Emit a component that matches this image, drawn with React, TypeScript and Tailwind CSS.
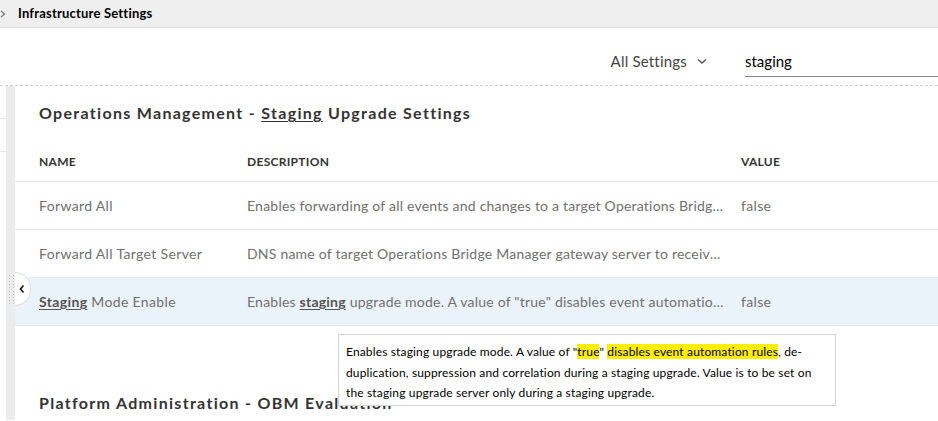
import React from "react";

const rows = [
  {
    name: <>Forward All</>,
    desc: <>Enables forwarding of all events and changes to a target Operations Bridge Manager gateway server</>,
    value: "false",
    active: false,
  },
  {
    name: <>Forward All Target Server</>,
    desc: <>DNS name of target Operations Bridge Manager gateway server to receive forwarded events</>,
    value: "",
    active: false,
  },
  {
    name: (
      <>
        <span className="font-bold underline underline-offset-2 text-[#555]">Staging</span> Mode Enable
      </>
    ),
    desc: (
      <>
        Enables <span className="font-bold underline underline-offset-2 text-[#555]">staging</span> upgrade mode. A value of "true" disables event automation rules, de-duplication
      </>
    ),
    value: "false",
    active: true,
  },
];

export default function App() {
  return (
    <div
      className="relative w-[938px] h-[421px] overflow-hidden bg-white text-[#333]"
      style={{ fontFamily: "Lato, 'Open Sans', sans-serif" }}
    >
      {/* Header bar */}
      <div className="h-[28px] bg-[#efefef] border-b border-[#dcdcdc] flex items-center">
        <svg width="10" height="10" viewBox="0 0 10 10" className="ml-[-2px]">
          <path d="M3 2 L6.5 5 L3 8" stroke="#777" strokeWidth="1.3" fill="none" />
        </svg>
        <span className="ml-[10px] text-[13px] font-bold text-black tracking-[0.2px]">Infrastructure Settings</span>
      </div>

      {/* Toolbar */}
      <div className="h-[58px] flex items-center justify-end border-b border-dashed border-[#d0d0d0]">
        <div className="flex items-center gap-[10px] mr-[38px] mt-[10px] text-[15px] text-[#444]">
          <span className="tracking-[0.2px]">All Settings</span>
          <svg width="10" height="7" viewBox="0 0 10 7">
            <path d="M1 1.5 L5 5 L9 1.5" stroke="#555" strokeWidth="1.5" fill="none" />
          </svg>
        </div>
        <div className="w-[193px] h-[30px] mt-[10px] border-b border-[#888] flex items-center text-[15px] text-black">
          staging
        </div>
      </div>

      {/* Body */}
      <div className="flex h-[334px]">
        <div className="w-[6px] flex flex-col">
          <div className="h-[33px] border-b border-[#e4e4e4]" />
          <div className="h-[33px] border-b border-[#e4e4e4]" />
        </div>
        <div className="w-[9px] bg-[#ececec]" />
        <div className="flex-1 pt-[17px]">
          <div className="pl-[24px] text-[16px] font-bold text-[#333] tracking-[1.3px] leading-[20px]">
            Operations Management - <span className="underline underline-offset-2">Staging</span> Upgrade Settings
          </div>
          <div className="mt-[19px] h-[40px] flex items-center border-b border-[#e8e8e8] text-[12px] font-bold text-[#333] tracking-[0.3px]">
            <div className="w-[232px] pl-[24px]">NAME</div>
            <div className="w-[494px]">DESCRIPTION</div>
            <div>VALUE</div>
          </div>
          {rows.map((r, i) => (
            <div
              key={i}
              className={`h-[48px] flex items-center border-b border-[#e8e8e8] text-[14px] text-[#707070] ${
                r.active ? "bg-[#ebf3fa]" : "bg-white"
              }`}
            >
              <div className="w-[232px] pl-[24px] whitespace-nowrap tracking-[0.35px]">{r.name}</div>
              <div className="w-[494px] pr-[16px] whitespace-nowrap overflow-hidden text-ellipsis tracking-[0.22px]">
                {r.desc}
              </div>
              <div className="tracking-[0.35px]">{r.value}</div>
            </div>
          ))}
          <div className="mt-[67px] pl-[24px] text-[16px] font-bold text-[#333] tracking-[1.3px] leading-[20px]">
            Platform Administration - OBM Evaluation
          </div>
        </div>
      </div>

      {/* Collapse handle */}
      <div className="absolute left-[9px] top-[274px] w-[5px] h-[31px] flex flex-col justify-between py-[1px]">
        {Array.from({ length: 10 }).map((_, i) => (
          <div key={i} className="flex justify-between">
            <div className="w-[1px] h-[1px] bg-[#bbb]" />
            <div className="w-[1px] h-[1px] bg-[#bbb]" />
          </div>
        ))}
      </div>
      <div className="absolute left-[15px] top-[272px] w-[16px] h-[34px] bg-white rounded-r-full border border-l-0 border-[#e0e0e0] flex items-center justify-center">
        <svg width="8" height="10" viewBox="0 0 8 10" className="mr-[2px]">
          <path d="M5.5 1.5 L2.5 5 L5.5 8.5" stroke="#111" strokeWidth="1.6" fill="none" />
        </svg>
      </div>

      {/* Tooltip */}
      <div className="absolute left-[338px] top-[334px] w-[498px] h-[72px] bg-white border border-[#d4d4d4] px-[7px] pt-[7px] text-[12px] leading-[20.5px] tracking-[0.15px] text-black">
        Enables staging upgrade mode. A value of "<span className="bg-[#ffee00]">true</span>"{" "}
        <span className="bg-[#ffee00]">disables event automation rules</span>, de-duplication, suppression and
        correlation during a staging upgrade. Value is to be set on the staging upgrade server only during a staging
        upgrade.
      </div>
    </div>
  );
}
